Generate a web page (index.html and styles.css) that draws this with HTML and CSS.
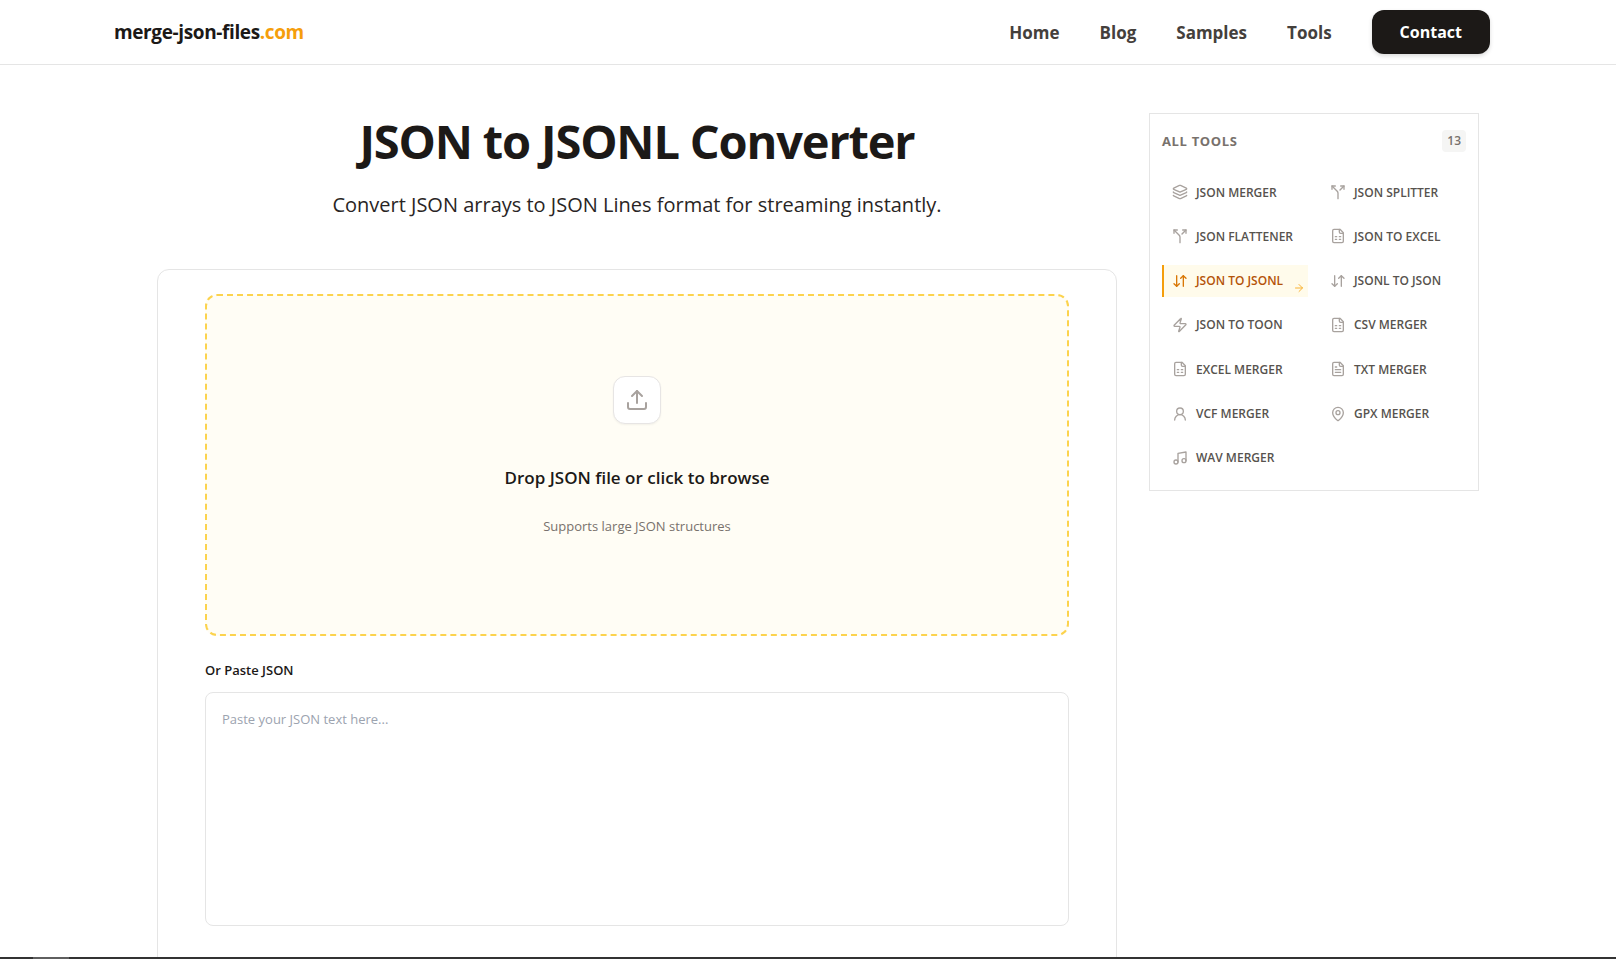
FILE: index.html
```html
<!DOCTYPE html>
<html lang="en">

<head>
	<meta charset="UTF-8">
	<meta name="viewport" content="width=device-width, initial-scale=1.0">
	<title>JSON to JSONL Converter</title>
	<link rel="stylesheet" href="styles.css">
</head>

<body>
	<!-- Shared icons -->
	<svg class="sprite" aria-hidden="true">
		<symbol id="layers" viewBox="0 0 24 24">
			<path d="M12.83 2.18a2 2 0 0 0-1.66 0L2.6 6.08a1 1 0 0 0 0 1.83l8.58 3.91a2 2 0 0 0 1.66 0l8.58-3.9a1 1 0 0 0 0-1.83z" />
			<path d="M2 12a1 1 0 0 0 .58.91l8.6 3.91a2 2 0 0 0 1.65 0l8.58-3.9A1 1 0 0 0 22 12" />
			<path d="M2 17a1 1 0 0 0 .58.91l8.6 3.91a2 2 0 0 0 1.65 0l8.58-3.9A1 1 0 0 0 22 17" />
		</symbol>
		<symbol id="split" viewBox="0 0 24 24">
			<path d="M16 3h5v5" />
			<path d="M8 3H3v5" />
			<path d="M12 22v-8.3a4 4 0 0 0-1.172-2.872L3 3" />
			<path d="m15 9 6-6" />
		</symbol>
		<symbol id="sheet" viewBox="0 0 24 24">
			<path d="M15 2H6a2 2 0 0 0-2 2v16a2 2 0 0 0 2 2h12a2 2 0 0 0 2-2V7z" />
			<path d="M14 2v4a2 2 0 0 0 2 2h4" />
			<path d="M8 13h2" />
			<path d="M14 13h2" />
			<path d="M8 17h2" />
			<path d="M14 17h2" />
		</symbol>
		<symbol id="file-text" viewBox="0 0 24 24">
			<path d="M15 2H6a2 2 0 0 0-2 2v16a2 2 0 0 0 2 2h12a2 2 0 0 0 2-2V7z" />
			<path d="M14 2v4a2 2 0 0 0 2 2h4" />
			<path d="M10 9H8" />
			<path d="M16 13H8" />
			<path d="M16 17H8" />
		</symbol>
		<symbol id="down-up" viewBox="0 0 24 24">
			<path d="m3 16 4 4 4-4" />
			<path d="M7 20V4" />
			<path d="m21 8-4-4-4 4" />
			<path d="M17 4v16" />
		</symbol>
		<symbol id="zap" viewBox="0 0 24 24">
			<path d="M4 14a1 1 0 0 1-.78-1.63l9.9-10.2a.5.5 0 0 1 .86.46l-1.92 6.02A1 1 0 0 0 13 10h7a1 1 0 0 1 .78 1.63l-9.9 10.2a.5.5 0 0 1-.86-.46l1.92-6.02A1 1 0 0 0 11 14z" />
		</symbol>
		<symbol id="user" viewBox="0 0 24 24">
			<circle cx="12" cy="8" r="5" />
			<path d="M20 21a8 8 0 0 0-16 0" />
		</symbol>
		<symbol id="pin" viewBox="0 0 24 24">
			<path d="M20 10c0 4.993-5.539 10.193-7.399 11.799a1 1 0 0 1-1.202 0C9.539 20.193 4 14.993 4 10a8 8 0 0 1 16 0" />
			<circle cx="12" cy="10" r="3" />
		</symbol>
		<symbol id="music" viewBox="0 0 24 24">
			<path d="M9 18V5l12-2v13" />
			<circle cx="6" cy="18" r="3" />
			<circle cx="18" cy="16" r="3" />
		</symbol>
		<symbol id="arrow-right" viewBox="0 0 24 24">
			<path d="M5 12h14" />
			<path d="m12 5 7 7-7 7" />
		</symbol>
		<symbol id="upload" viewBox="0 0 24 24">
			<path d="M21 15v4a2 2 0 0 1-2 2H5a2 2 0 0 1-2-2v-4" />
			<path d="m17 8-5-5-5 5" />
			<path d="M12 3v12" />
		</symbol>
	</svg>

	<header class="header">
		<div class="header-inner">
			<a class="logo" href="#">merge-json-files<span class="logo-tld">.com</span></a>
			<nav class="nav">
				<a href="#">Home</a>
				<a href="#">Blog</a>
				<a href="#">Samples</a>
				<a href="#">Tools</a>
				<a class="contact-btn" href="#">Contact</a>
			</nav>
		</div>
	</header>

	<main class="page">
		<section class="converter">
			<h1 class="title">JSON to JSONL Converter</h1>
			<p class="subtitle">Convert JSON arrays to JSON Lines format for streaming instantly.</p>

			<div class="card">
				<button class="dropzone" type="button">
					<span class="upload-box"><svg class="upload-icon"><use href="#upload" /></svg></span>
					<span class="drop-title">Drop JSON file or click to browse</span>
					<span class="drop-hint">Supports large JSON structures</span>
				</button>
				<label class="paste-label" for="json-text">Or Paste JSON</label>
				<textarea class="paste-box" id="json-text" placeholder="Paste your JSON text here..."></textarea>
			</div>
		</section>

		<aside class="sidebar">
			<div class="sidebar-head">
				<h2 class="sidebar-title">All Tools</h2>
				<span class="count">13</span>
			</div>
			<nav class="tool-list">
				<a class="tool" href="#"><svg class="icon"><use href="#layers" /></svg>JSON Merger</a>
				<a class="tool" href="#"><svg class="icon"><use href="#split" /></svg>JSON Splitter</a>
				<a class="tool" href="#"><svg class="icon"><use href="#split" /></svg>JSON Flattener</a>
				<a class="tool" href="#"><svg class="icon"><use href="#sheet" /></svg>JSON to Excel</a>
				<a class="tool active" href="#"><svg class="icon"><use href="#down-up" /></svg>JSON to JSONL<svg class="go"><use href="#arrow-right" /></svg></a>
				<a class="tool" href="#"><svg class="icon"><use href="#down-up" /></svg>JSONL to JSON</a>
				<a class="tool" href="#"><svg class="icon"><use href="#zap" /></svg>JSON to TOON</a>
				<a class="tool" href="#"><svg class="icon"><use href="#sheet" /></svg>CSV Merger</a>
				<a class="tool" href="#"><svg class="icon"><use href="#sheet" /></svg>Excel Merger</a>
				<a class="tool" href="#"><svg class="icon"><use href="#file-text" /></svg>TXT Merger</a>
				<a class="tool" href="#"><svg class="icon"><use href="#user" /></svg>VCF Merger</a>
				<a class="tool" href="#"><svg class="icon"><use href="#pin" /></svg>GPX Merger</a>
				<a class="tool" href="#"><svg class="icon"><use href="#music" /></svg>WAV Merger</a>
			</nav>
		</aside>
	</main>

	<div class="bottom-bar"><div class="bottom-thumb"></div></div>
</body>

</html>
```
FILE: styles.css
```css
* {
	box-sizing: border-box;
}

body {
	margin: 0;
	height: 100vh;
	overflow: hidden;
	background-color: #fff;
	color: #1c1917;
	font-family: "Open Sans", "Noto Sans", sans-serif;
}

a {
	color: inherit;
	text-decoration: none;
}

svg {
	fill: none;
	stroke: currentColor;
	stroke-width: 2;
	stroke-linecap: round;
	stroke-linejoin: round;
	flex-shrink: 0;
}

.sprite {
	display: none;
}

/* Header */
.header {
	padding-right: 12px;
	border-bottom: 1px solid #e5e5e5;
}

.header-inner {
	display: flex;
	align-items: center;
	justify-content: space-between;
	max-width: 1376px;
	height: 64px;
	margin: 0 auto;
}

.logo {
	font-size: 19px;
	font-weight: 700;
	letter-spacing: -0.02em;
}

.logo-tld {
	color: #f59e0b;
}

.nav {
	display: flex;
	align-items: center;
	gap: 40px;
	color: #44403c;
	font-size: 17px;
	font-weight: 700;
}

.contact-btn {
	padding: 0 28px;
	border-radius: 12px;
	background-color: #1c1917;
	color: #fff;
	font-size: 16px;
	line-height: 44px;
	box-shadow: 0 2px 4px rgba(0, 0, 0, 0.15);
}

/* Page columns */
.page {
	display: flex;
	align-items: flex-start;
	gap: 32px;
	max-width: 1342px;
	margin: 0 auto;
	padding: 48px 0 0 20px;
}

.converter {
	flex: 1;
	text-align: center;
}

.title {
	margin: 0;
	font-size: 47px;
	font-weight: 700;
	line-height: 56px;
	letter-spacing: -0.025em;
}

.subtitle {
	margin: 20px 0 48px;
	color: #292524;
	font-size: 20px;
	line-height: 32px;
}

.card {
	padding: 24px 47px 48px;
	border: 1px solid #e5e5e5;
	border-radius: 12px;
	text-align: left;
}

.dropzone {
	display: flex;
	flex-direction: column;
	align-items: center;
	width: 100%;
	height: 342px;
	padding: 80px 0 0;
	border: 2px dashed #fcd34d;
	border-radius: 12px;
	background-color: #fffdf5;
	color: #1c1917;
	font-family: inherit;
	cursor: pointer;
}

.upload-box {
	display: flex;
	align-items: center;
	justify-content: center;
	width: 48px;
	height: 48px;
	border: 1px solid #e7e5e4;
	border-radius: 12px;
	background-color: #fff;
	color: #a8a29e;
	box-shadow: 0 1px 2px rgba(0, 0, 0, 0.05);
}

.upload-icon {
	width: 24px;
	height: 24px;
}

.drop-title {
	margin-top: 40px;
	font-size: 17px;
	font-weight: 600;
	line-height: 28px;
}

.drop-hint {
	margin-top: 24px;
	color: #78716c;
	font-size: 13px;
	line-height: 20px;
}

.paste-label {
	display: block;
	margin: 24px 0 12px;
	font-size: 13px;
	font-weight: 600;
	line-height: 20px;
}

.paste-box {
	display: block;
	width: 100%;
	height: 234px;
	padding: 16px;
	border: 1px solid #e5e5e5;
	border-radius: 8px;
	font-family: inherit;
	font-size: 13px;
	line-height: 20px;
	resize: none;
}

.paste-box::placeholder {
	color: #9ca3af;
}

/* Sidebar */
.sidebar {
	width: 330px;
	padding: 16px 12px;
	border: 1px solid #e5e5e5;
}

.sidebar-head {
	display: flex;
	align-items: center;
	justify-content: space-between;
	margin-bottom: 24px;
	color: #78716c;
}

.sidebar-title {
	margin: 0;
	font-size: 13px;
	font-weight: 700;
	letter-spacing: 0.05em;
	text-transform: uppercase;
}

.count {
	padding: 0 5px;
	border-radius: 4px;
	background-color: #f5f5f4;
	font-size: 12px;
	font-weight: 600;
	line-height: 22px;
}

.tool-list {
	display: grid;
	grid-template-columns: 1fr 1fr;
	column-gap: 12px;
	align-content: space-between;
	height: 298px;
}

.tool {
	position: relative;
	display: flex;
	align-items: center;
	gap: 8px;
	height: 32px;
	padding-left: 8px;
	border-left: 2px solid transparent;
	color: #57534e;
	font-size: 12px;
	font-weight: 600;
	text-transform: uppercase;
	white-space: nowrap;
}

.icon {
	width: 16px;
	height: 16px;
	color: #a8a29e;
}

.active {
	border-left-color: #f59e0b;
	background-color: #fffbeb;
	color: #b45309;
}

.active .icon {
	color: #d97706;
}

.go {
	position: absolute;
	right: 3px;
	bottom: 3px;
	width: 12px;
	height: 12px;
	color: #f9b233;
}

/* Dark bar along the bottom edge of the window */
.bottom-bar {
	position: fixed;
	left: 0;
	right: 0;
	bottom: 0;
	height: 2px;
	padding-left: 33px;
	background-color: #333;
}

.bottom-thumb {
	width: 36px;
	height: 2px;
	background-color: #5f5f5f;
}
```
